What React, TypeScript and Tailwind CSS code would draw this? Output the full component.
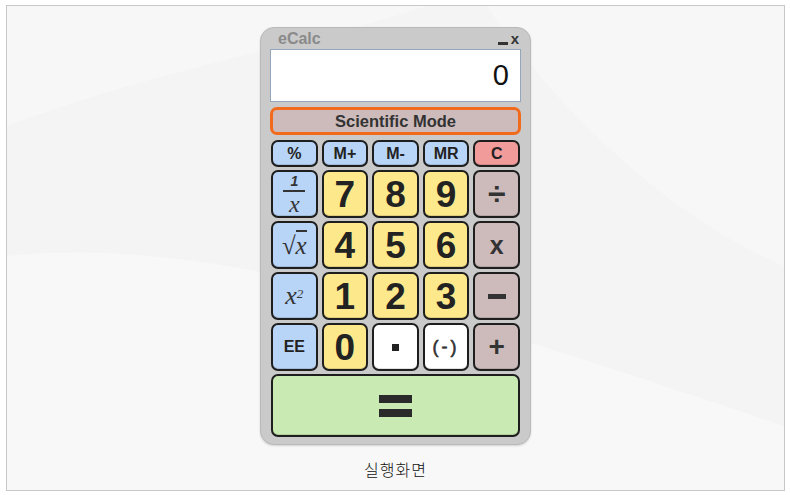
import type { ReactNode } from "react";

const btn =
  "flex items-center justify-center rounded-[7px] border-2 border-[#1e1e1e] shadow-[inset_0_-1px_0_rgba(0,0,0,0.12)]";

function Key({ color, children }: { color: string; children: ReactNode }) {
  return <div className={`${btn} ${color} h-[48px]`}>{children}</div>;
}

function Digit({ n }: { n: string }) {
  return (
    <Key color="bg-[#fde98c]">
      <span className="text-[37px] font-bold leading-none text-[#222]">{n}</span>
    </Key>
  );
}

function Op({ s, size }: { s: string; size: string }) {
  return (
    <Key color="bg-[#cdbbbb]">
      <span className={`${size} font-bold leading-none text-[#333]`}>{s}</span>
    </Key>
  );
}

export default function App() {
  return (
    <div className="h-[495px] w-[790px] bg-white pl-[6px] pt-[5px] font-['Liberation_Sans',Arial,sans-serif]">
      <div className="relative flex h-[486px] w-[779px] flex-col items-center overflow-hidden border border-[#c8c8c8] bg-[#f4f4f4]">
        <svg
          className="absolute inset-0"
          width="777"
          height="484"
          viewBox="0 0 777 484"
        >
          <path d="M0 250 C200 230 420 300 777 420 L777 484 L0 484 Z" fill="#f8f8f8" />
          <path d="M480 0 C560 120 680 220 777 260 L777 0 Z" fill="#f7f7f7" />
          <path d="M0 120 C160 60 300 40 420 0 L0 0 Z" fill="#f7f7f7" />
        </svg>

        <div className="relative mt-[21px] flex h-[418px] w-[271px] flex-col rounded-[14px] border border-[#b9b9b9] bg-[#cacaca] px-[9px] shadow-[0_1px_2px_rgba(0,0,0,0.15)]">
          <div className="flex h-[21px] items-center justify-between pl-[8px] pr-[2px]">
            <span className="text-[16px] font-bold text-[#8a8a8a]">eCalc</span>
            <div className="flex items-end gap-[3px] text-[#333]">
              <span className="mb-[1px] block h-[3px] w-[10px] bg-[#333]" />
              <span className="text-[15px] font-bold leading-none">x</span>
            </div>
          </div>

          <div className="flex h-[53px] items-center justify-end border border-[#93a6ba] bg-white pr-[11px]">
            <span className="text-[29px] leading-none text-[#111]">0</span>
          </div>

          <div className="mt-[5px] flex h-[28px] items-center justify-center rounded-[7px] border-[3px] border-[#f26a1b] bg-[#cdbbbb]">
            <span className="text-[16.5px] font-bold text-[#333]">Scientific Mode</span>
          </div>

          <div className="mt-[5px] grid grid-cols-5 gap-x-[4px] px-[1px]">
            {["%", "M+", "M-", "MR"].map((t) => (
              <div key={t} className={`${btn} h-[27px] bg-[#b8d4f6]`}>
                <span className="text-[16px] font-bold text-[#222]">{t}</span>
              </div>
            ))}
            <div className={`${btn} h-[27px] bg-[#f19b9b]`}>
              <span className="text-[16px] font-bold text-[#222]">C</span>
            </div>
          </div>

          <div className="mt-[3px] grid grid-cols-5 gap-x-[4px] gap-y-[3px] px-[1px]">
            <Key color="bg-[#b8d4f6]">
              <div className="flex flex-col items-center font-['Liberation_Serif',serif] italic text-[#333]">
                <span className="font-['Liberation_Sans',sans-serif] text-[14px] font-bold leading-[14px]">1</span>
                <span className="my-[2px] block h-[2px] w-[22px] bg-[#333]" />
                <span className="text-[24px] leading-[20px]">x</span>
              </div>
            </Key>
            <Digit n="7" />
            <Digit n="8" />
            <Digit n="9" />
            <Op s="÷" size="text-[32px]" />

            <Key color="bg-[#b8d4f6]">
              <span className="font-['Liberation_Serif',serif] text-[25px] leading-none text-[#333]">
                √<span className="border-t-2 border-[#333] italic">x</span>
              </span>
            </Key>
            <Digit n="4" />
            <Digit n="5" />
            <Digit n="6" />
            <Op s="x" size="text-[25px]" />

            <Key color="bg-[#b8d4f6]">
              <span className="font-['Liberation_Serif',serif] text-[26px] italic leading-none text-[#333]">
                x<sup className="text-[13px]">2</sup>
              </span>
            </Key>
            <Digit n="1" />
            <Digit n="2" />
            <Digit n="3" />
            <Key color="bg-[#cdbbbb]">
              <span className="block h-[5px] w-[18px] bg-[#333]" />
            </Key>

            <Key color="bg-[#b8d4f6]">
              <span className="text-[16px] font-bold text-[#222]">EE</span>
            </Key>
            <Digit n="0" />
            <Key color="bg-white">
              <span className="block h-[7px] w-[7px] bg-[#222]" />
            </Key>
            <Key color="bg-white">
              <span className="text-[18px] tracking-[3px] text-[#333] [-webkit-text-stroke:0.6px_#333]">(-)</span>
            </Key>
            <Op s="+" size="text-[28px]" />
          </div>

          <div className={`${btn} mx-[1px] mt-[3px] h-[63px] flex-col gap-[6px] bg-[#c9eab2]`}>
            <span className="block h-[8px] w-[33px] bg-[#2a2a2a]" />
            <span className="block h-[8px] w-[33px] bg-[#2a2a2a]" />
          </div>
        </div>

        <p className="relative mt-[12px] font-['Noto_Sans_CJK_KR',sans-serif] text-[16px] font-light tracking-[1px] text-[#111]">
          실행화면
        </p>
      </div>
    </div>
  );
}
